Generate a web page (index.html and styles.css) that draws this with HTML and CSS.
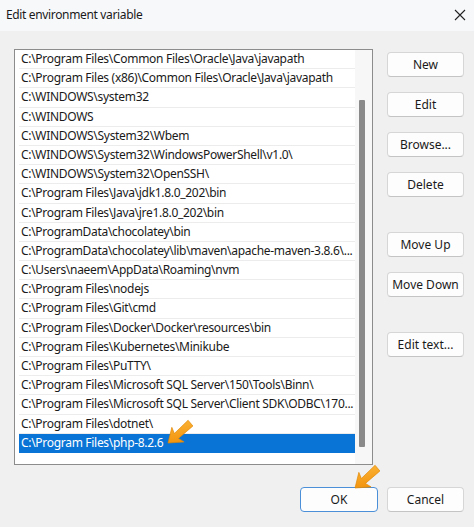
FILE: index.html
```html
<!DOCTYPE html>
<html>
<head>
<meta charset="utf-8">
<link rel="stylesheet" href="styles.css">
</head>
<body>
<div class="dialog">
  <div class="titlebar">
    <span class="title">Edit environment variable</span>
    <svg class="close" width="12" height="12" viewBox="0 0 12 12"><path d="M1 1L11 11M11 1L1 11" stroke="#222" stroke-width="1.1" fill="none"/></svg>
  </div>
  <div class="content">
    <div class="listbox">
      <div class="rows">
        <div class="row">C:\Program Files\Common Files\Oracle\Java\javapath</div>
        <div class="row">C:\Program Files (x86)\Common Files\Oracle\Java\javapath</div>
        <div class="row">C:\WINDOWS\system32</div>
        <div class="row">C:\WINDOWS</div>
        <div class="row">C:\WINDOWS\System32\Wbem</div>
        <div class="row">C:\WINDOWS\System32\WindowsPowerShell\v1.0\</div>
        <div class="row">C:\WINDOWS\System32\OpenSSH\</div>
        <div class="row">C:\Program Files\Java\jdk1.8.0_202\bin</div>
        <div class="row">C:\Program Files\Java\jre1.8.0_202\bin</div>
        <div class="row">C:\ProgramData\chocolatey\bin</div>
        <div class="row">C:\ProgramData\chocolatey\lib\maven\apache-maven-3.8.6\...</div>
        <div class="row">C:\Users\naeem\AppData\Roaming\nvm</div>
        <div class="row">C:\Program Files\nodejs</div>
        <div class="row">C:\Program Files\Git\cmd</div>
        <div class="row">C:\Program Files\Docker\Docker\resources\bin</div>
        <div class="row">C:\Program Files\Kubernetes\Minikube</div>
        <div class="row">C:\Program Files\PuTTY\</div>
        <div class="row">C:\Program Files\Microsoft SQL Server\150\Tools\Binn\</div>
        <div class="row">C:\Program Files\Microsoft SQL Server\Client SDK\ODBC\170...</div>
        <div class="row">C:\Program Files\dotnet\</div>
        <div class="row selected">C:\Program Files\php-8.2.6</div>
      </div>
      <div class="scrollbar"><div class="thumb"></div></div>
    </div>
    <div class="buttons">
      <div class="group">
        <button class="btn">New</button>
        <button class="btn">Edit</button>
        <button class="btn">Browse...</button>
        <button class="btn">Delete</button>
      </div>
      <div class="group">
        <button class="btn">Move Up</button>
        <button class="btn">Move Down</button>
      </div>
      <div class="group">
        <button class="btn">Edit text...</button>
      </div>
    </div>
  </div>
  <div class="footer">
    <button class="btn default">OK</button>
    <button class="btn">Cancel</button>
  </div>
  <svg class="arrow arrow-list" width="36" height="34" viewBox="0 0 36 34"><defs><linearGradient id="g1" x1="0" y1="1" x2="1" y2="0"><stop offset="0" stop-color="#f08a00"/><stop offset="1" stop-color="#fcb73c"/></linearGradient></defs><g transform="translate(4 30) rotate(-40)"><path d="M0 0 L13 -9.5 L11 -3.2 L30 -4.5 L30 3 L11 3.2 L13 9.5 Z" fill="url(#g1)" stroke="#e08600" stroke-width="0.6" stroke-linejoin="round"/></g></svg>
  <svg class="arrow arrow-ok" width="36" height="34" viewBox="0 0 36 34"><defs><linearGradient id="g2" x1="0" y1="1" x2="1" y2="0"><stop offset="0" stop-color="#f08a00"/><stop offset="1" stop-color="#fcb73c"/></linearGradient></defs><g transform="translate(4 30) rotate(-40)"><path d="M0 0 L13 -9.5 L11 -3.2 L30 -4.5 L30 3 L11 3.2 L13 9.5 Z" fill="url(#g2)" stroke="#e08600" stroke-width="0.6" stroke-linejoin="round"/></g></svg>
</div>
</body>
</html>
```
FILE: styles.css
```css
* { box-sizing: border-box; }
html, body { margin: 0; padding: 0; }
body {
  font-family: "Noto Sans", "Open Sans", sans-serif;
  font-size: 12px;
  color: #1a1a1a;
  background: #f0f0f0;
}
.dialog {
  position: relative;
  width: 474px;
  height: 527px;
  background: #f0f0f0;
  overflow: hidden;
}
.titlebar {
  height: 31px;
  background: #f7f8fa;
  display: flex;
  align-items: center;
  justify-content: space-between;
  padding: 0 8px 2px 6px;
}
.title { font-size: 12px; letter-spacing: -0.35px; color: #1a1a1a; }
.close { display: block; }
.content {
  display: flex;
  padding: 18px 0 0 14px;
}
.listbox {
  width: 359px;
  height: 416px;
  border: 1px solid #8c8c8c;
  background: #ffffff;
  display: flex;
}
.rows {
  flex: 1;
  padding: 0 0 0 4px;
  min-width: 0;
}
.row {
  height: 19.2px;
  line-height: 18px;
  padding-left: 2px;
  border-bottom: 1px solid #ececec;
  white-space: nowrap;
  overflow: hidden;
  text-overflow: ellipsis;
  letter-spacing: -0.3px;
  color: #1a1a1a;
}
.row.selected {
  background: #0a74d6;
  color: #ffffff;
  border-bottom-color: #0a74d6;
}
.scrollbar {
  width: 17px;
  background: #f7f7f7;
}
.thumb {
  margin: 50px 0 0 4px;
  width: 6px;
  height: 347px;
  background: #8a8a8a;
  border-radius: 1px;
}
.buttons {
  margin-left: 14px;
  width: 77px;
  display: flex;
  flex-direction: column;
  padding-top: 3px;
  gap: 35px;
}
.group {
  display: flex;
  flex-direction: column;
  gap: 15px;
}
.btn {
  font-family: "Noto Sans", "Open Sans", sans-serif;
  font-size: 12px;
  color: #1a1a1a;
  width: 77px;
  height: 25px;
  padding: 0;
  background: #fdfdfd;
  border: 1px solid #d6d6d6;
  border-bottom-color: #c4c4c4;
  border-radius: 4px;
  line-height: 22px;
}
.footer {
  display: flex;
  justify-content: flex-end;
  gap: 9px;
  padding: 22px 10px 0 0;
}
.btn.default {
  width: 78px;
  border: 1px solid #4a8fd8;
}
.arrow { position: absolute; }
.arrow-list { left: 164px; top: 413px; }
.arrow-ok { left: 351px; top: 458px; }
```
